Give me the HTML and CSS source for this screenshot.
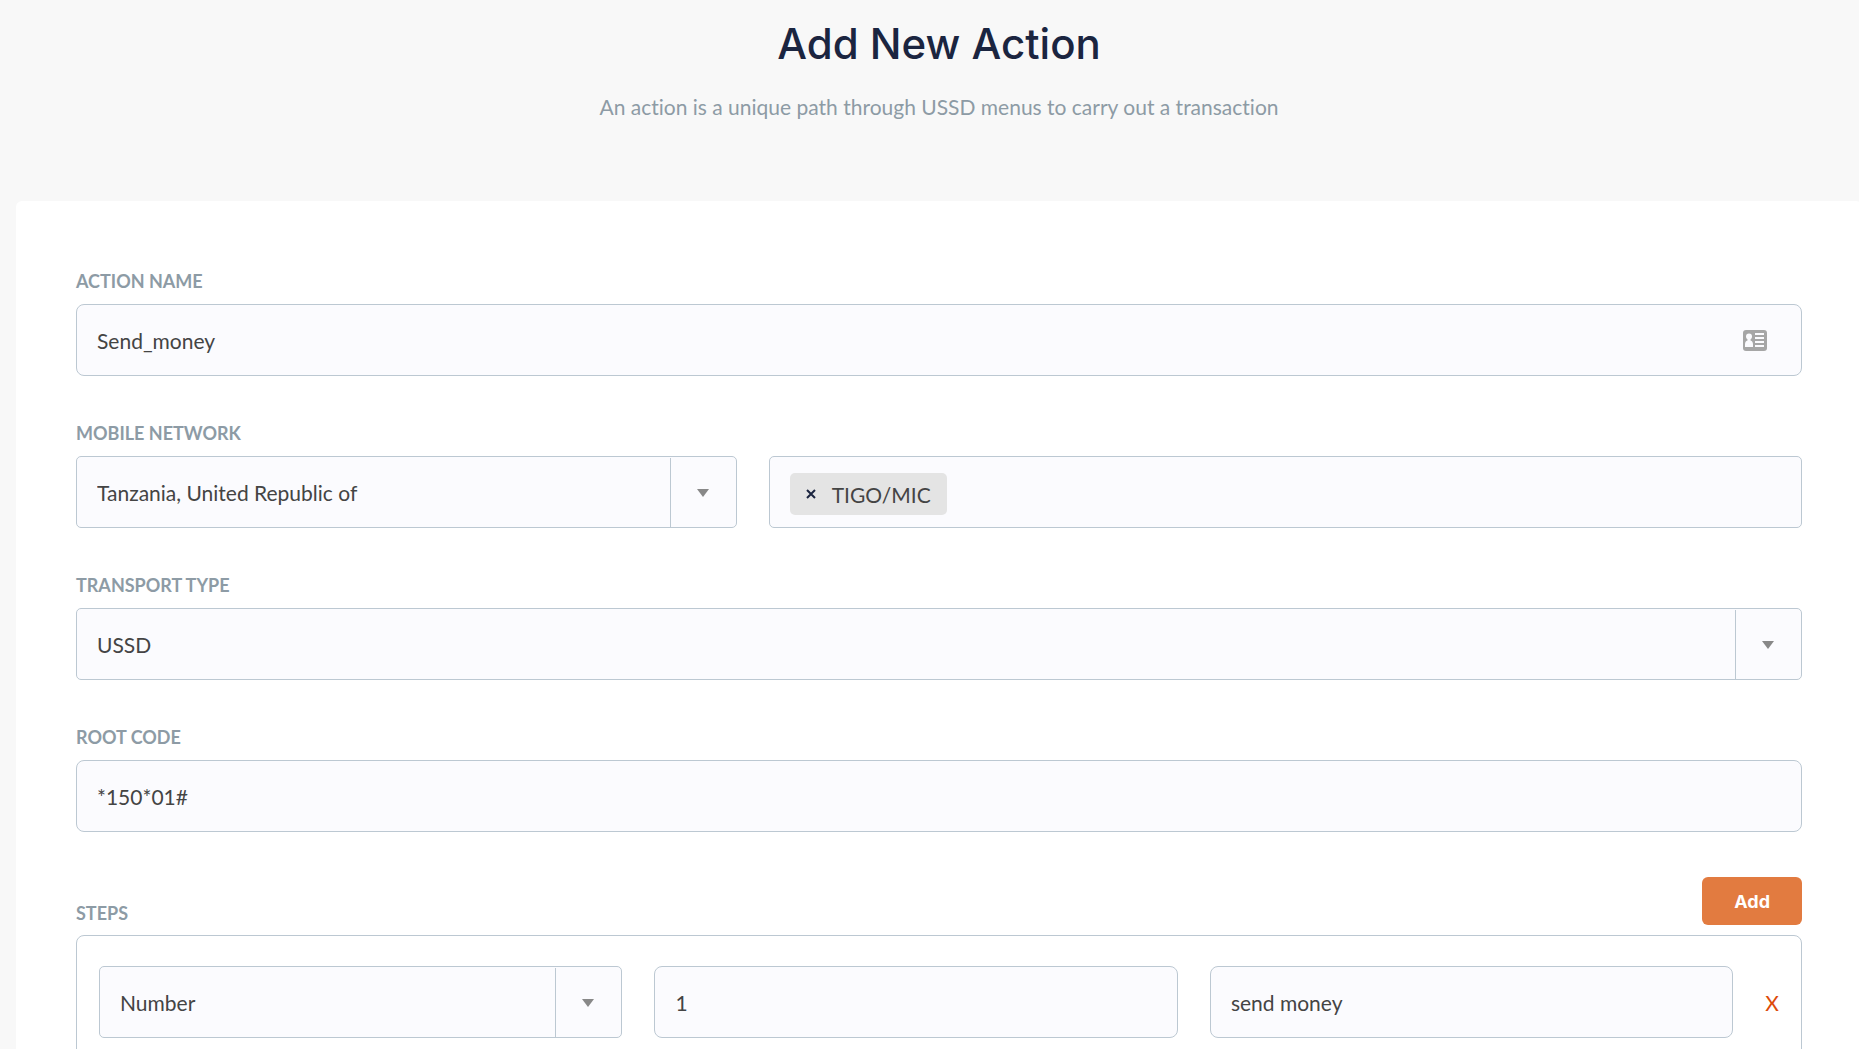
FILE: index.html
```
<!DOCTYPE html>
<html lang="en">
<head>
  <meta charset="UTF-8" />
  <meta name="viewport" content="width=device-width, initial-scale=1.0"/>
  <title>Add New Action</title>
  <link rel="stylesheet" href="styles.css">
</head>
<body>

  <div class="container">
    <header class="page-header">
      <h1>Add New Action</h1>
      <p>An action is a unique path through USSD menus to carry out a transaction</p>
    </header>

    <form class="panel">
      <div class="form-group">
        <label for="actionName">ACTION NAME</label>
        <div class="input-wrap">
          <input type="text" id="actionName" value="Send_money" />
          <svg class="card-icon" viewBox="0 0 24 21" aria-hidden="true">
            <rect width="24" height="21" rx="3" fill="#a6a6a6"/>
            <circle cx="6" cy="6.5" r="3" fill="#fbfbfe"/>
            <path d="M4.5 8h3v2.500c1.700.5 2.500 1.800 2.500 4V17H2v-2.500c0-2.200.8-3.500 2.500-4z" fill="#fbfbfe"/>
            <path d="M12 4h9M12 8h9M12 12h9M12 16h9" stroke="#fbfbfe" stroke-width="2"/>
          </svg>
        </div>
      </div>

      <div class="form-group">
        <label for="country">MOBILE NETWORK</label>
        <div class="network-row">
          <div class="select-wrap">
            <select id="country">
              <option>Tanzania, United Republic of</option>
            </select>
          </div>
          <div class="tags">
            <span class="tag">
              <button type="button" class="tag-remove" aria-label="Remove TIGO/MIC">
                <svg viewBox="0 0 10 10" aria-hidden="true"><path d="M1 1l8 8M9 1L1 9"/></svg>
              </button>
              TIGO/MIC
            </span>
          </div>
        </div>
      </div>

      <div class="form-group">
        <label for="transport">TRANSPORT TYPE</label>
        <div class="select-wrap">
          <select id="transport">
            <option>USSD</option>
          </select>
        </div>
      </div>

      <div class="form-group">
        <label for="rootCode">ROOT CODE</label>
        <input type="text" id="rootCode" value="*150*01#" />
      </div>

      <div class="steps-header">
        <label for="stepType">STEPS</label>
        <button type="button" class="add-btn">Add</button>
      </div>
      <div class="steps">
        <div class="step">
          <div class="select-wrap">
            <select id="stepType">
              <option>Number</option>
            </select>
          </div>
          <input type="text" value="1" aria-label="Step value" />
          <input type="text" value="send money" aria-label="Step description" />
          <button type="button" class="step-remove">X</button>
        </div>
      </div>
    </form>
  </div>

</body>
</html>
```

FILE: styles.css
```
* {
  box-sizing: border-box;
}

html {
  scrollbar-width: none;
}

body {
  background-color: #f8f8f8;
  font-family: Lato, sans-serif;
  font-size: 21px;
  font-variant-ligatures: none;
  color: #444;
  margin: 0;
  overflow-x: hidden;
}

.container {
  margin-left: 16px;
  margin-right: -3px;
}

.page-header {
  height: 201px;
  padding-top: 18px;
  text-align: center;
}

h1 {
  font-family: Inter, sans-serif;
  font-size: 42px;
  font-weight: 500;
  line-height: 52px;
  color: #1b2540;
  margin: 0 0 22px;
}

.page-header p {
  line-height: 30px;
  color: #8d9ba5;
  margin: 0;
}

.panel {
  background-color: #fff;
  border-radius: 6px;
  padding: 68px 60px 60px;
}

.form-group {
  margin-bottom: 45px;
}

label {
  display: block;
  font-size: 18px;
  font-weight: bold;
  line-height: 24px;
  color: #8d9ba5;
  margin-bottom: 11px;
}

input,
select {
  display: block;
  width: 100%;
  height: 72px;
  padding: 0 20px;
  border: 1px solid #bcc8d2;
  border-radius: 8px;
  background-color: #fbfbfe;
  font-family: inherit;
  font-size: inherit;
  color: #444;
}

select {
  appearance: none;
  border-radius: 5px;
}

.input-wrap,
.select-wrap {
  position: relative;
}

.card-icon {
  position: absolute;
  top: 26px;
  right: 35px;
  width: 24px;
  height: 21px;
}

/* arrow box at the right end of a select */
.select-wrap::before {
  content: "";
  position: absolute;
  top: 2px;
  bottom: 1px;
  right: 66px;
  width: 1px;
  background-color: #bcc8d2;
}

.select-wrap::after {
  content: "";
  position: absolute;
  top: 33px;
  right: 28px;
  border: 6px solid transparent;
  border-top: 8px solid #888;
  border-bottom: 0;
}

.network-row {
  display: grid;
  grid-template-columns: 39fr 61fr;
  gap: 32px;
}

.tags {
  height: 72px;
  padding: 16px 20px;
  border: 1px solid #bcc8d2;
  border-radius: 5px;
  background-color: #fbfbfe;
}

.tag {
  display: inline-flex;
  align-items: center;
  gap: 16px;
  height: 42px;
  padding: 0 16px;
  border-radius: 5px;
  background-color: #e4e4e4;
  vertical-align: top;
}

button {
  border: none;
  padding: 0;
  background: none;
  font-family: inherit;
  font-size: inherit;
  cursor: pointer;
}

.tag-remove {
  display: flex;
}

.tag-remove svg {
  width: 10px;
  height: 10px;
  stroke: #1b2540;
  stroke-width: 2;
}

.steps-header {
  display: flex;
  justify-content: space-between;
  align-items: flex-end;
  margin-bottom: 10px;
}

.steps-header label {
  margin-bottom: 0;
}

.add-btn {
  height: 48px;
  padding: 0 32px;
  border-radius: 6px;
  background-color: #e27b40;
  font-family: Inter, sans-serif;
  font-size: 18px;
  font-weight: bold;
  color: #fff;
}

.steps {
  padding: 30px 22px;
  border: 1px solid #bcc8d2;
  border-radius: 8px;
}

.step {
  display: grid;
  grid-template-columns: 1fr 1fr 1fr auto;
  align-items: center;
  gap: 32px;
}

.step-remove {
  color: #dd4b0a;
}
```
